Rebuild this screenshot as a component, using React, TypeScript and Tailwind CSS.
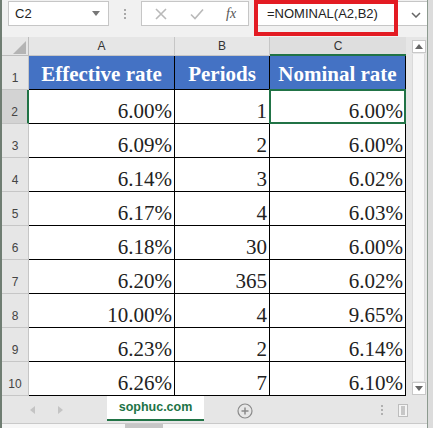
import React from "react";

const rows: [string, string, string][] = [
  ["6.00%", "1", "6.00%"],
  ["6.09%", "2", "6.00%"],
  ["6.14%", "3", "6.02%"],
  ["6.17%", "4", "6.03%"],
  ["6.18%", "30", "6.00%"],
  ["6.20%", "365", "6.02%"],
  ["10.00%", "4", "9.65%"],
  ["6.23%", "2", "6.14%"],
  ["6.26%", "7", "6.10%"],
];

const ui = { fontFamily: '"Liberation Sans", Arial, sans-serif' };
const serif = { fontFamily: '"Liberation Serif", "Times New Roman", serif' };

function TopBar() {
  return (
    <div className="h-[37px] flex items-start bg-[#f1f1f1] pt-[1px]" style={ui}>
      {/* name box */}
      <div className="ml-[6px] w-[101px] h-[25px] bg-white border border-[#c6c6c6] flex items-center justify-between pl-[6px] pr-[8px]">
        <span className="text-[13px] text-[#222]">C2</span>
        <svg width="8" height="5" viewBox="0 0 8 5">
          <polygon points="0,0 8,0 4,5" fill="#777" />
        </svg>
      </div>
      <div className="w-[32px] h-[25px] flex flex-col items-center justify-center gap-[2px]">
        <span className="w-[2px] h-[2px] bg-[#a8a8a8]" />
        <span className="w-[2px] h-[2px] bg-[#a8a8a8]" />
        <span className="w-[2px] h-[2px] bg-[#a8a8a8]" />
      </div>
      {/* cancel / enter / fx */}
      <div className="w-[108px] h-[25px] bg-white border border-[#c6c6c6] flex items-center">
        <svg width="12" height="12" viewBox="0 0 12 12" className="ml-[13px]">
          <path d="M1 1 L11 11 M11 1 L1 11" stroke="#b9b9b9" strokeWidth="1.6" />
        </svg>
        <svg width="14" height="12" viewBox="0 0 14 12" className="ml-[23px]">
          <path d="M1 6.5 L5 10.5 L13 1.5" stroke="#b9b9b9" strokeWidth="1.6" fill="none" />
        </svg>
        <span className="ml-[22px] text-[14px] italic text-[#555]" style={serif}>
          fx
        </span>
      </div>
      {/* formula area */}
      <div className="relative ml-[5px] flex-1 h-[25px] bg-white border-t border-b border-[#c6c6c6] flex items-center">
        <span className="ml-[13px] text-[13px] text-[#222]">=NOMINAL(A2,B2)</span>
        <svg width="10" height="6" viewBox="0 0 10 6" className="absolute right-[6px] top-[10px]">
          <path d="M1 1 L5 5 L9 1" stroke="#666" strokeWidth="1.5" fill="none" />
        </svg>
        <div className="absolute left-0 top-[-2px] w-[144px] h-[36px] border-[4px] border-[#e31b23]" />
      </div>
    </div>
  );
}

function Grid() {
  return (
    <div className="grid grid-cols-[27px_146px_95px_136px] grid-rows-[19px_repeat(10,34px)] w-[404px]">
      {/* corner */}
      <div className="bg-[#e6e6e6] border-r border-b border-[#bdbdbd]">
        <svg width="26" height="18" viewBox="0 0 26 18">
          <polygon points="24,4 24,17 11,17" fill="#b4b4b4" />
        </svg>
      </div>
      {["A", "B"].map((c) => (
        <div
          key={c}
          className="bg-[#e6e6e6] border-r border-b border-[#c6c6c6] flex items-center justify-center text-[12px] text-[#333]"
          style={ui}
        >
          {c}
        </div>
      ))}
      <div
        className="bg-[#dedede] border-b-2 border-[#217346] flex items-center justify-center text-[12px] text-[#333]"
        style={ui}
      >
        C
      </div>

      {/* row 1 */}
      <div className="bg-[#e6e6e6] border-r border-b border-[#c6c6c6] flex items-end justify-center pb-[4px] text-[12px] leading-[14px] text-[#444]" style={ui}>
        1
      </div>
      {["Effective rate", "Periods", "Nominal rate"].map((t) => (
        <div
          key={t}
          className="bg-[#4472c4] border-r border-b border-black flex items-end justify-center pb-[3px] text-[21px] leading-[24px] font-bold text-white"
          style={serif}
        >
          {t}
        </div>
      ))}

      {rows.map((r, i) => {
        const sel = i === 0;
        return (
          <React.Fragment key={i}>
            <div
              className={`border-b border-[#c6c6c6] flex items-end justify-center pb-[4px] text-[12px] leading-[14px] text-[#444] ${
                sel ? "bg-[#d3d3d3] border-r-2 border-r-[#217346]" : "bg-[#e6e6e6] border-r"
              }`}
              style={ui}
            >
              {i + 2}
            </div>
            {r.map((v, j) => (
              <div
                key={j}
                className="relative bg-white border-r border-b border-black flex items-end justify-end pr-[2px] text-[21px] leading-[24px] text-[#222]"
                style={serif}
              >
                {v}
                {sel && j === 2 && (
                  <div className="absolute left-[-1px] top-[-1px] right-[-1px] bottom-[-1px] border-2 border-[#217346]" />
                )}
              </div>
            ))}
          </React.Fragment>
        );
      })}
    </div>
  );
}

function VScroll() {
  return (
    <div className="w-[17px] flex flex-col items-center pt-[3px] pb-[1px] bg-[#e6e6e6]">
      <div className="w-[14px] h-[13px] bg-white border border-[#c8c8c8] flex items-center justify-center">
        <svg width="8" height="5" viewBox="0 0 8 5">
          <polygon points="0,5 8,5 4,0" fill="#666" />
        </svg>
      </div>
      <div className="w-[13px] flex-1 bg-[#f7f7f7] border-l border-r border-[#dadada] my-[1px]" />
      <div className="w-[14px] h-[13px] bg-white border border-[#c8c8c8] flex items-center justify-center">
        <svg width="8" height="5" viewBox="0 0 8 5">
          <polygon points="0,0 8,0 4,5" fill="#666" />
        </svg>
      </div>
    </div>
  );
}

function TabBar() {
  return (
    <div className="h-[28px] flex items-start bg-[#e6e6e6] border-b border-[#c9c9c9]" style={ui}>
      <svg width="6" height="8" viewBox="0 0 6 8" className="ml-[28px] mt-[10px]">
        <polygon points="5,0 5,8 0,4" fill="#c4c4c4" />
      </svg>
      <svg width="6" height="8" viewBox="0 0 6 8" className="ml-[22px] mt-[10px]">
        <polygon points="0,0 0,8 5,4" fill="#c4c4c4" />
      </svg>
      <div className="ml-[43px] w-[97px] h-[25px] bg-white border-b-2 border-[#217346] flex items-center justify-center text-[12.5px] font-bold text-[#217346]">
        sophuc.com
      </div>
      <svg width="16" height="16" viewBox="0 0 16 16" className="ml-[33px] mt-[7px]">
        <circle cx="8" cy="8" r="7" stroke="#8a8a8a" strokeWidth="1.2" fill="none" />
        <path d="M8 4.5 V11.5 M4.5 8 H11.5" stroke="#8a8a8a" strokeWidth="1.5" />
      </svg>
      <div className="ml-[128px] mt-[9px] flex flex-col gap-[2px]">
        <span className="w-[2px] h-[2px] bg-[#b0b0b0]" />
        <span className="w-[2px] h-[2px] bg-[#b0b0b0]" />
        <span className="w-[2px] h-[2px] bg-[#b0b0b0]" />
      </div>
      <svg width="10" height="13" viewBox="0 0 10 13" className="ml-[15px] mt-[8px]">
        <rect x="0.5" y="0.5" width="9" height="12" fill="#f4f4f4" stroke="#bdbdbd" />
        <path d="M4 2 V11 M6 2 V11" stroke="#9a9a9a" />
      </svg>
    </div>
  );
}

export default function App() {
  return (
    <div className="w-[433px] h-[428px] flex overflow-hidden bg-[#e6e6e6]">
      <div className="w-[2px] bg-[#6f7d72]" />
      <div className="w-[425px] flex flex-col">
        <TopBar />
        <div className="flex h-[359px]">
          <Grid />
          <div className="w-[4px] bg-[#e6e6e6]" />
          <VScroll />
        </div>
        <TabBar />
        <div className="h-[4px] bg-[#f7f7f7] flex">
          <div className="ml-[123px] w-[38px] h-[4px] bg-[#c6c6c6]" />
        </div>
      </div>
      <div className="w-[6px] bg-[#dcdcdc] border-l border-[#8c9a8f]" />
    </div>
  );
}
